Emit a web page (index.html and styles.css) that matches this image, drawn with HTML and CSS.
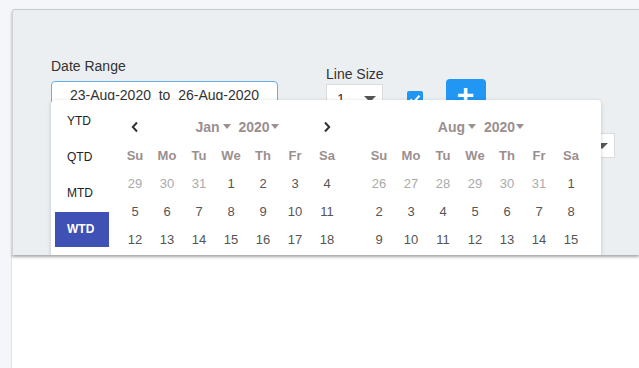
FILE: index.html
```html
<!DOCTYPE html>
<html>
<head>
<meta charset="utf-8">
<link rel="stylesheet" href="styles.css">
</head>
<body>
<div class="panel">
  <div class="filters">
    <div class="field date-field">
      <label class="lbl">Date Range</label>
      <div class="date-input">23-Aug-2020  to  26-Aug-2020</div>
    </div>
    <div class="field size-field">
      <label class="lbl">Line Size</label>
      <div class="select small"><span>1</span><i class="caret"></i></div>
    </div>
    <div class="check"><svg width="16" height="16" viewBox="0 0 16 16"><path d="M3.5 8.2l3 3 6-6.4" fill="none" stroke="#fff" stroke-width="2"/></svg></div>
    <button class="add">+</button>
  </div>
  <div class="row2">
    <div class="select wide"><span></span><i class="caret"></i></div>
  </div>

  <div class="popup">
    <ul class="ranges">
      <li>YTD</li>
      <li>QTD</li>
      <li>MTD</li>
      <li class="active">WTD</li>
    </ul>
    <div class="cal">
      <div class="cal-head">
        <span class="nav"><svg width="8" height="12" viewBox="0 0 8 12"><path d="M6 1.5L1.8 6 6 10.5" fill="none" stroke="#333" stroke-width="2"/></svg></span>
        <span class="my">Jan<i class="dcaret"></i> 2020<i class="dcaret"></i></span>
        <span class="nav"><svg width="8" height="12" viewBox="0 0 8 12"><path d="M2 1.5L6.2 6 2 10.5" fill="none" stroke="#333" stroke-width="2"/></svg></span>
      </div>
      <div class="grid">
        <b>Su</b><b>Mo</b><b>Tu</b><b>We</b><b>Th</b><b>Fr</b><b>Sa</b>
        <span class="off">29</span><span class="off">30</span><span class="off">31</span><span>1</span><span>2</span><span>3</span><span>4</span>
        <span>5</span><span>6</span><span>7</span><span>8</span><span>9</span><span>10</span><span>11</span>
        <span>12</span><span>13</span><span>14</span><span>15</span><span>16</span><span>17</span><span>18</span>
      </div>
    </div>
    <div class="cal">
      <div class="cal-head">
        <span class="nav"></span>
        <span class="my">Aug<i class="dcaret"></i> 2020<i class="dcaret"></i></span>
        <span class="nav"></span>
      </div>
      <div class="grid">
        <b>Su</b><b>Mo</b><b>Tu</b><b>We</b><b>Th</b><b>Fr</b><b>Sa</b>
        <span class="off">26</span><span class="off">27</span><span class="off">28</span><span class="off">29</span><span class="off">30</span><span class="off">31</span><span>1</span>
        <span>2</span><span>3</span><span>4</span><span>5</span><span>6</span><span>7</span><span>8</span>
        <span>9</span><span>10</span><span>11</span><span>12</span><span>13</span><span>14</span><span>15</span>
      </div>
    </div>
  </div>
</div>
<div class="content"></div>
</body>
</html>
```
FILE: styles.css
```css
html, body { margin: 0; height: 100%; }
body {
  background: #f5f6fa;
  padding-top: 9px;
  box-sizing: border-box;
  font-family: "Liberation Sans", Arial, sans-serif;
  color: #333;
  overflow: hidden;
  display: flex;
  flex-direction: column;
}
.panel {
  position: relative;
  flex: none;
  margin-left: 12px;
  height: 246px;
  box-sizing: border-box;
  background: #eceff1;
  border-top: 1px solid #c9c9c9;
  border-left: 1px solid #d2d2d2;
  border-top-left-radius: 3px;
  box-shadow: 0 2px 3px rgba(0,0,0,0.35);
  overflow: hidden;
  z-index: 1;
}
.content {
  flex: 1;
  margin-left: 11px;
  border-left: 1px solid #e4e4e4;
  background: #fff;
}
.filters {
  display: flex;
  align-items: flex-start;
  padding-left: 38px;
}
.field { display: flex; flex-direction: column; }
.lbl { font-size: 14px; line-height: 17px; color: #333; }
.date-field { margin-top: 48px; width: 227px; }
.date-field .lbl { margin-bottom: 6px; }
.date-input {
  height: 34px;
  box-sizing: border-box;
  border: 1px solid #66afe9;
  border-radius: 4px;
  background: #fff;
  padding: 3px 18px 0;
  font-size: 14px;
  line-height: 20px;
  white-space: pre;
  color: #333;
}
.size-field { margin-top: 56px; margin-left: 48px; }
.size-field .lbl { margin-bottom: 1px; }
.select {
  height: 30px;
  box-sizing: border-box;
  background: #fff;
  border: 1px solid #dcdcdc;
  display: flex;
  align-items: center;
  justify-content: space-between;
  padding: 0 6px 0 10px;
  font-size: 14px;
  color: #333;
}
.select.small { width: 57px; }
.caret {
  width: 0; height: 0;
  border-left: 6px solid transparent;
  border-right: 6px solid transparent;
  border-top: 6px solid #555;
}
.check {
  margin-top: 81px;
  margin-left: 23px;
  width: 16px; height: 16px;
  background: #2196f3;
  border-radius: 2px;
}
.check svg { display: block; }
.add {
  margin-top: 69px;
  margin-left: 23px;
  width: 40px; height: 36px;
  border: 0;
  border-radius: 4px;
  background: #2196f3;
  color: #fff;
  font-family: "Liberation Sans", Arial, sans-serif;
  font-size: 30px;
  font-weight: bold;
  line-height: 30px;
  padding: 0 0 4px;
}
.row2 {
  display: flex;
  padding-left: 527px;
  margin-top: 18px;
}
.select.wide { width: 75px; height: 25px; }
.popup {
  position: absolute;
  left: 38px;
  top: 90px;
  width: 550px;
  height: 240px;
  box-sizing: border-box;
  background: #fff;
  border-radius: 4px;
  box-shadow: 0 1px 4px rgba(0,0,0,0.18);
  display: flex;
  align-items: flex-start;
  padding: 0 14px 0 0;
}
.ranges {
  list-style: none;
  margin: 0;
  padding: 4px 0 0 4px;
  width: 54px;
}
.ranges li {
  height: 35px;
  margin-bottom: 1px;
  padding-left: 12px;
  font-size: 12px;
  line-height: 35px;
  color: #222;
}
.ranges li.active {
  background: #3f51b5;
  color: #fff;
  font-weight: bold;
}
.cal { width: 224px; margin-left: 10px; padding-top: 13px; }
.cal + .cal { margin-left: 20px; }
.cal-head {
  height: 28px;
  display: flex;
  align-items: center;
  justify-content: space-between;
}
.nav { width: 32px; display: flex; justify-content: center; }
.nav svg { display: block; }
.my {
  font-size: 14px;
  font-weight: bold;
  color: #9b8f8f;
  padding-left: 12px;
  white-space: nowrap;
}
.dcaret {
  display: inline-block;
  width: 0; height: 0;
  margin: 0 4px 3px 3px;
  vertical-align: middle;
  border-left: 4.5px solid transparent;
  border-right: 4.5px solid transparent;
  border-top: 5px solid #9b8f8f;
}
.dcaret:last-child { margin-right: 0; margin-left: 1px; }
.grid {
  display: grid;
  grid-template-columns: repeat(7, 32px);
  grid-auto-rows: 28px;
  align-items: center;
  justify-items: center;
}
.grid b { font-size: 13px; font-weight: bold; color: #9b8f8f; }
.grid span { font-size: 13px; color: #555; }
.grid span.off { color: #aaa; }
```
